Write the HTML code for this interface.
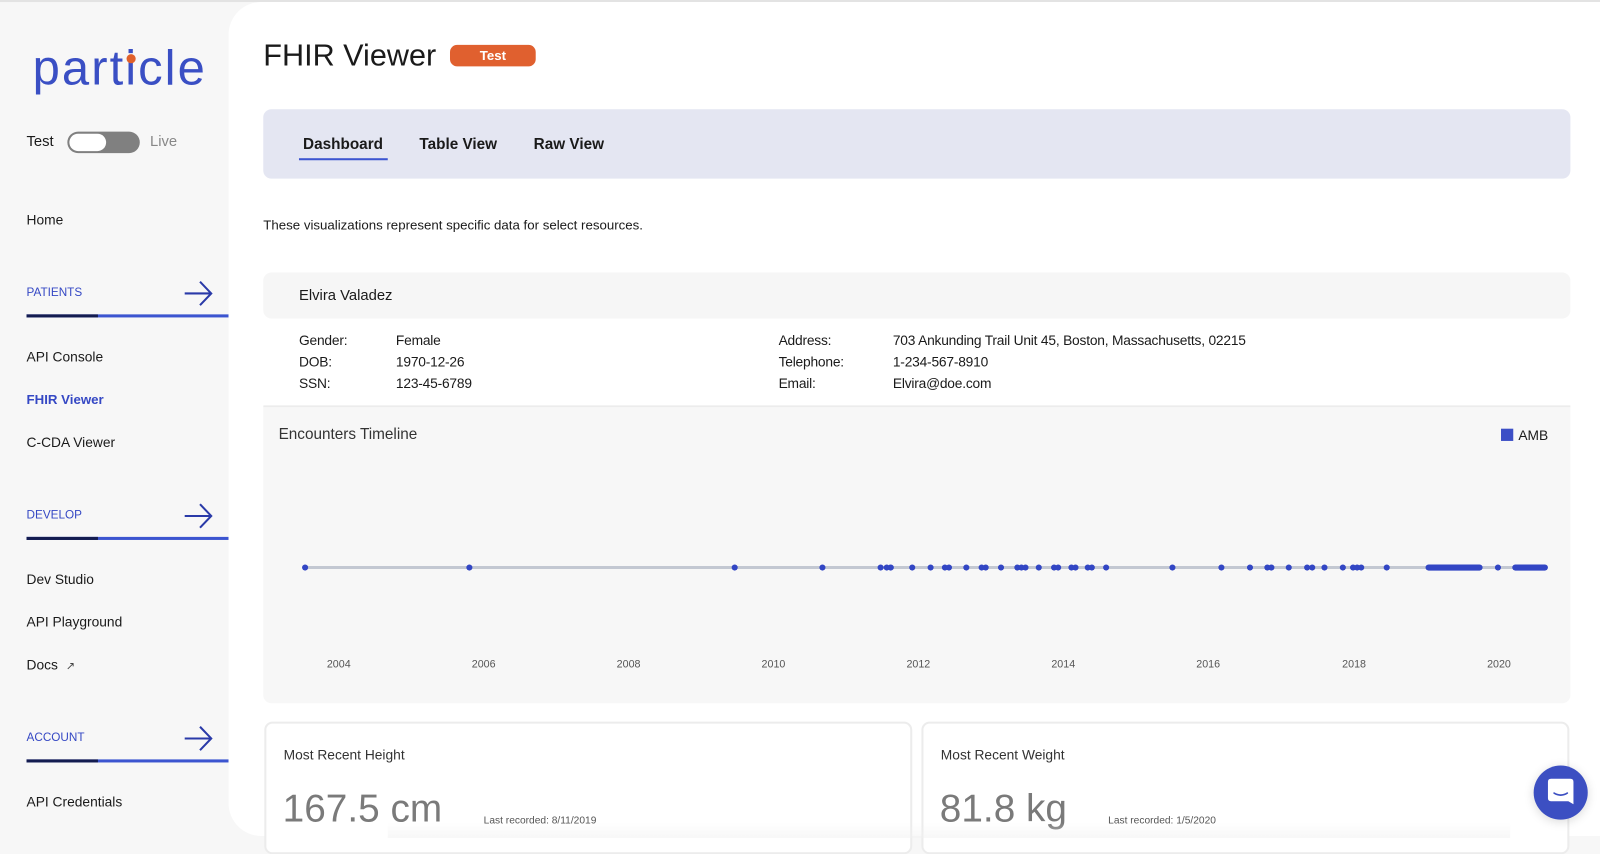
<!DOCTYPE html>
<html><head><meta charset="utf-8"><style>
*{margin:0;padding:0;box-sizing:border-box}
html,body{width:1600px;height:838px;overflow:hidden;background:#f7f7f7;font-family:"Liberation Sans",sans-serif;color:#1a1a1a}
#wrap{position:absolute;left:0;top:0;width:1568px;height:821px;transform:scale(1.0204,1.0207);transform-origin:0 0;background:#f7f7f7}
.a{position:absolute;white-space:nowrap}
.topline{position:absolute;left:0;top:0;width:1568px;height:2px;background:#e3e3e3}
.main{position:absolute;left:224px;top:2px;width:1344px;height:817px;background:#fff;border-radius:32px 0 0 32px}
.nav{font-size:13.5px;color:#1a1a1a;left:26px}
.sec{font-size:11.5px;color:#3548c4;left:26px}
.bar{position:absolute;left:26px;width:198px;height:3px;background:#3c55d0}
.bar i{position:absolute;left:0;top:0;width:70px;height:3px;background:#141c50}
.lbl{font-size:13.5px;letter-spacing:-.2px}
</style></head><body><div id="wrap">
<div class="topline"></div>
<div class="a" style="left:32px;top:40px;font-size:48px;color:#3a4fc4;letter-spacing:2px;font-family:'Liberation Sans',sans-serif">par<span>t</span><span style="position:relative">i<span style="position:absolute;left:1px;top:12px;width:9px;height:9px;border-radius:50%;background:#e0602a"></span></span>cle</div>
<div class="a nav" style="top:131px;font-size:14.5px">Test</div>
<div class="a" style="left:66px;top:129px;width:71px;height:21px;border-radius:11px;background:#808080"></div>
<div class="a" style="left:68px;top:131px;width:36px;height:17px;border-radius:9px;background:#fff"></div>
<div class="a" style="left:147px;top:131px;font-size:14.5px;color:#888">Live</div>
<div class="a nav" style="top:208px">Home</div>
<div class="a sec" style="top:281px">PATIENTS</div>
<svg class="a" style="left:180px;top:274px" width="30" height="28"><path d="M1 13.5H27M16 2L27 13.5L16 25" fill="none" stroke="#2a3aa8" stroke-width="2"/></svg>
<div class="bar" style="top:308px"><i></i></div>
<div class="a nav" style="top:342px">API Console</div>
<div class="a nav" style="top:384px;color:#3548c4;font-weight:bold;font-size:13px">FHIR Viewer</div>
<div class="a nav" style="top:426px">C-CDA Viewer</div>
<div class="a sec" style="top:499px">DEVELOP</div>
<svg class="a" style="left:180px;top:492px" width="30" height="28"><path d="M1 13.5H27M16 2L27 13.5L16 25" fill="none" stroke="#2a3aa8" stroke-width="2"/></svg>
<div class="bar" style="top:526px"><i></i></div>
<div class="a nav" style="top:560px">Dev Studio</div>
<div class="a nav" style="top:602px">API Playground</div>
<div class="a nav" style="top:644px">Docs <span style="font-size:11px;color:#444;margin-left:4px">&#x2197;</span></div>
<div class="a sec" style="top:717px">ACCOUNT</div>
<svg class="a" style="left:180px;top:710px" width="30" height="28"><path d="M1 13.5H27M16 2L27 13.5L16 25" fill="none" stroke="#2a3aa8" stroke-width="2"/></svg>
<div class="bar" style="top:744px"><i></i></div>
<div class="a nav" style="top:778px">API Credentials</div>

<div class="main"></div>
<div class="a" style="left:258px;top:38px;font-size:30px;font-weight:300;color:#1a1a1a">FHIR Viewer</div>
<div class="a" style="left:441px;top:44px;width:84px;height:21px;border-radius:7px;background:#e0602f;color:#fff;font-size:13px;font-weight:bold;text-align:center;line-height:21px">Test</div>
<div class="a" style="left:258px;top:107px;width:1281px;height:68px;border-radius:8px;background:#e4e6f2"></div>
<div class="a" style="left:297px;top:133px;font-size:15px;font-weight:bold">Dashboard</div>
<div class="a" style="left:293px;top:155px;width:87px;height:2px;background:#3c55d0"></div>
<div class="a" style="left:411px;top:133px;font-size:15px;font-weight:bold">Table View</div>
<div class="a" style="left:523px;top:133px;font-size:15px;font-weight:bold">Raw View</div>
<div class="a" style="left:258px;top:213px;font-size:13px">These visualizations represent specific data for select resources.</div>

<div class="a" style="left:258px;top:267px;width:1281px;height:45px;border-radius:8px;background:#f6f6f6"></div>
<div class="a" style="left:293px;top:282px;font-size:14.5px">Elvira Valadez</div>
<div class="a lbl" style="left:293px;top:326px">Gender:</div><div class="a lbl" style="left:388px;top:326px">Female</div>
<div class="a lbl" style="left:293px;top:347px">DOB:</div><div class="a lbl" style="left:388px;top:347px">1970-12-26</div>
<div class="a lbl" style="left:293px;top:368px">SSN:</div><div class="a lbl" style="left:388px;top:368px">123-45-6789</div>
<div class="a lbl" style="left:763px;top:326px">Address:</div><div class="a lbl" style="left:875px;top:326px">703 Ankunding Trail Unit 45, Boston, Massachusetts, 02215</div>
<div class="a lbl" style="left:763px;top:347px">Telephone:</div><div class="a lbl" style="left:875px;top:347px">1-234-567-8910</div>
<div class="a lbl" style="left:763px;top:368px">Email:</div><div class="a lbl" style="left:875px;top:368px">Elvira@doe.com</div>

<div class="a" style="left:258px;top:397px;width:1281px;height:292px;border-radius:0 0 8px 8px;background:#f7f7f7;border-top:2px solid #ececec"></div>
<div class="a" style="left:273px;top:417px;font-size:15px;font-weight:300;color:#333">Encounters Timeline</div>
<div class="a" style="left:1471px;top:420px;width:12px;height:12px;background:#3c4fc6"></div>
<div class="a" style="left:1488px;top:419px;font-size:13.5px">AMB</div>
<svg class="a" style="left:0;top:0" width="1568" height="700">
<line x1="299" y1="556" x2="1515" y2="556" stroke="#c3c8d2" stroke-width="3"/>
<g fill="#3246c4">
<circle cx="299" cy="556" r="3"/><circle cx="460" cy="556" r="3"/><circle cx="720" cy="556" r="3"/><circle cx="806" cy="556" r="3"/>
<circle cx="863" cy="556" r="3"/><circle cx="869" cy="556" r="3"/><circle cx="873" cy="556" r="3"/><circle cx="894" cy="556" r="3"/><circle cx="912" cy="556" r="3"/><circle cx="926" cy="556" r="3"/><circle cx="930" cy="556" r="3"/><circle cx="947" cy="556" r="3"/><circle cx="962" cy="556" r="3"/><circle cx="966" cy="556" r="3"/><circle cx="981" cy="556" r="3"/><circle cx="997" cy="556" r="3"/><circle cx="1001" cy="556" r="3"/><circle cx="1005" cy="556" r="3"/><circle cx="1018" cy="556" r="3"/><circle cx="1033" cy="556" r="3"/><circle cx="1037" cy="556" r="3"/><circle cx="1050" cy="556" r="3"/><circle cx="1054" cy="556" r="3"/><circle cx="1066" cy="556" r="3"/><circle cx="1070" cy="556" r="3"/><circle cx="1084" cy="556" r="3"/>
<circle cx="1149" cy="556" r="3"/><circle cx="1197" cy="556" r="3"/><circle cx="1225" cy="556" r="3"/><circle cx="1242" cy="556" r="3"/><circle cx="1246" cy="556" r="3"/><circle cx="1263" cy="556" r="3"/><circle cx="1281" cy="556" r="3"/><circle cx="1286" cy="556" r="3"/><circle cx="1298" cy="556" r="3"/><circle cx="1316" cy="556" r="3"/><circle cx="1326" cy="556" r="3"/><circle cx="1330" cy="556" r="3"/><circle cx="1334" cy="556" r="3"/><circle cx="1359" cy="556" r="3"/>
</g>
<line x1="1400" y1="556" x2="1450" y2="556" stroke="#3246c4" stroke-width="6" stroke-linecap="round"/>
<circle cx="1468" cy="556" r="3" fill="#3246c4"/>
<line x1="1485" y1="556" x2="1514" y2="556" stroke="#3246c4" stroke-width="6" stroke-linecap="round"/>
<g font-family="Liberation Sans" font-size="10.5" fill="#555" text-anchor="middle">
<text x="332" y="654">2004</text><text x="474" y="654">2006</text><text x="616" y="654">2008</text><text x="758" y="654">2010</text><text x="900" y="654">2012</text><text x="1042" y="654">2014</text><text x="1184" y="654">2016</text><text x="1327" y="654">2018</text><text x="1469" y="654">2020</text>
</g></svg>

<div class="a" style="left:259px;top:707px;width:635px;height:130px;border:2px solid #ececec;border-radius:8px;background:#fff"></div>
<div class="a" style="left:903px;top:707px;width:635px;height:130px;border:2px solid #ececec;border-radius:8px;background:#fff"></div>
<div class="a" style="left:278px;top:732px;font-size:13.5px;font-weight:300;color:#333">Most Recent Height</div>
<div class="a" style="left:277px;top:772px;font-size:38px;color:#7a7a7a">167.5 cm</div>
<div class="a" style="left:474px;top:799px;font-size:10px;color:#555">Last recorded: 8/11/2019</div>
<div class="a" style="left:922px;top:732px;font-size:13.5px;font-weight:300;color:#333">Most Recent Weight</div>
<div class="a" style="left:921px;top:772px;font-size:38px;color:#7a7a7a">81.8 kg</div>
<div class="a" style="left:1086px;top:799px;font-size:10px;color:#555">Last recorded: 1/5/2020</div>
<div class="a" style="left:380px;top:806px;width:1100px;height:15px;background:linear-gradient(rgba(255,255,255,0),rgba(240,240,240,.5))"></div>

<div class="a" style="left:1503px;top:750px;width:53px;height:53px;border-radius:50%;background:#3c4fc2;box-shadow:0 2px 10px rgba(0,0,0,.15)"></div>
<svg class="a" style="left:1516px;top:762px" width="28" height="30"><path d="M4 1H23Q26 1 26 4V26L21 23H4Q1 23 1 20V4Q1 1 4 1Z" fill="#fff"/><path d="M7 15Q13.5 19 20 15" fill="none" stroke="#3c4fc2" stroke-width="1.6" stroke-linecap="round"/></svg>
</div></body></html>
